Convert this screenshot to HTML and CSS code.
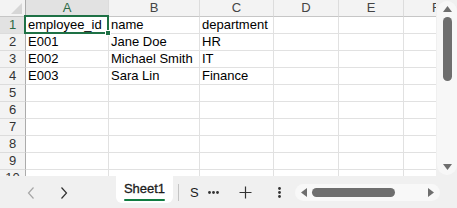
FILE: index.html
```html
<!DOCTYPE html>
<html>
<head>
<meta charset="utf-8">
<link rel="stylesheet" href="styles.css">
</head>
<body>
<div class="app">
  <div class="main">
    <div class="sheet">
      <div class="corner"><svg width="26" height="17" viewBox="0 0 26 17"><polygon points="22,3 22,14 11,14" fill="#d6d6d6"/></svg></div>
      <div class="ch sel">A</div><div class="ch">B</div><div class="ch">C</div><div class="ch">D</div><div class="ch">E</div><div class="ch">F</div>

      <div class="rh sel">1</div><div class="c">employee_id</div><div class="c">name</div><div class="c">department</div><div class="c"></div><div class="c"></div><div class="c"></div>
      <div class="rh">2</div><div class="c">E001</div><div class="c">Jane Doe</div><div class="c">HR</div><div class="c"></div><div class="c"></div><div class="c"></div>
      <div class="rh">3</div><div class="c">E002</div><div class="c">Michael Smith</div><div class="c">IT</div><div class="c"></div><div class="c"></div><div class="c"></div>
      <div class="rh">4</div><div class="c">E003</div><div class="c">Sara Lin</div><div class="c">Finance</div><div class="c"></div><div class="c"></div><div class="c"></div>
      <div class="rh">5</div><div class="c"></div><div class="c"></div><div class="c"></div><div class="c"></div><div class="c"></div><div class="c"></div>
      <div class="rh">6</div><div class="c"></div><div class="c"></div><div class="c"></div><div class="c"></div><div class="c"></div><div class="c"></div>
      <div class="rh">7</div><div class="c"></div><div class="c"></div><div class="c"></div><div class="c"></div><div class="c"></div><div class="c"></div>
      <div class="rh">8</div><div class="c"></div><div class="c"></div><div class="c"></div><div class="c"></div><div class="c"></div><div class="c"></div>
      <div class="rh">9</div><div class="c"></div><div class="c"></div><div class="c"></div><div class="c"></div><div class="c"></div><div class="c"></div>
      <div class="rh">10</div><div class="c"></div><div class="c"></div><div class="c"></div><div class="c"></div><div class="c"></div><div class="c"></div>
      <div class="selection"><span class="handle"></span></div>
    </div>
    <div class="vscroll">
      <div class="vtrack">
        <svg class="arr-up" width="9" height="6" viewBox="0 0 9 6"><polygon points="4.5,0 9,6 0,6" fill="#6e6e6e"/></svg>
        <div class="vthumb"></div>
        <div class="vspace"></div>
        <svg class="arr-down" width="9" height="6" viewBox="0 0 9 6"><polygon points="0,0 9,0 4.5,6" fill="#6e6e6e"/></svg>
      </div>
    </div>
  </div>
  <div class="tabbar">
    <div class="nav">
      <svg width="8" height="12" viewBox="0 0 8 12"><polyline points="6.5,0.5 1.5,6 6.5,11.5" fill="none" stroke="#a6a6a6" stroke-width="1.2"/></svg>
      <svg width="8" height="12" viewBox="0 0 8 12"><polyline points="1.5,0.5 6.5,6 1.5,11.5" fill="none" stroke="#303030" stroke-width="1.2"/></svg>
    </div>
    <div class="tab"><span class="tab-label">Sheet1</span><span class="tab-line"></span></div>
    <div class="sep"></div>
    <div class="tab2">S</div>
    <svg class="more" width="11" height="3" viewBox="0 0 11 3"><circle cx="1.5" cy="1.5" r="1.4" fill="#333"/><circle cx="5.5" cy="1.5" r="1.4" fill="#333"/><circle cx="9.5" cy="1.5" r="1.4" fill="#333"/></svg>
    <svg class="plus" width="13" height="13" viewBox="0 0 13 13"><path d="M6.5 0.5V12.5M0.5 6.5H12.5" stroke="#333" stroke-width="1.2"/></svg>
    <svg class="kebab" width="3" height="11" viewBox="0 0 3 11"><circle cx="1.5" cy="1.5" r="1.4" fill="#333"/><circle cx="1.5" cy="5.5" r="1.4" fill="#333"/><circle cx="1.5" cy="9.5" r="1.4" fill="#333"/></svg>
    <div class="hscroll">
      <svg width="6" height="9" viewBox="0 0 6 9"><polygon points="0,4.5 6,0 6,9" fill="#6e6e6e"/></svg>
      <div class="hthumb"></div>
      <div class="hspace"></div>
      <svg width="6" height="9" viewBox="0 0 6 9"><polygon points="0,0 6,4.5 0,9" fill="#6e6e6e"/></svg>
    </div>
  </div>
</div>
</body>
</html>
```
FILE: styles.css
```css
* { box-sizing: border-box; }
html, body { margin: 0; padding: 0; }
body {
  width: 457px;
  height: 208px;
  overflow: hidden;
  font-family: "Liberation Sans", Arial, sans-serif;
  font-size: 13px;
  background: #f0f0f0;
}
.app { display: flex; flex-direction: column; width: 457px; height: 208px; }
.main { display: flex; height: 176px; }
.sheet {
  position: relative;
  flex: 0 0 436px;
  width: 436px;
  height: 176px;
  overflow: hidden;
  background: #fff;
  display: grid;
  grid-template-columns: 26px 83px 91px 74px 65px 65px 65px;
  grid-auto-rows: 17px;
}
.corner { background: #f3f3f3; border-right: 1px solid #ababab; border-bottom: 1px solid #c6c6c6; }
.corner svg { display: block; }
.ch {
  background: #f3f3f3;
  color: #444;
  text-align: center;
  line-height: 16px;
  border-right: 1px solid #dcdcdc;
  border-bottom: 1px solid #c6c6c6;
}
.ch.sel { background: #e2e2e2; color: #2b6a47; }
.rh {
  background: #f3f3f3;
  color: #333;
  text-align: center;
  line-height: 16px;
  border-right: 1px solid #ababab;
  border-bottom: 1px solid #dcdcdc;
}
.rh.sel { background: #e2e2e2; color: #2b6a47; }
.c {
  color: #000;
  line-height: 16px;
  padding-left: 2px;
  white-space: nowrap;
  overflow: hidden;
  border-right: 1px solid #e1e1e1;
  border-bottom: 1px solid #e1e1e1;
}
.selection {
  position: absolute;
  left: 24px;
  top: 15px;
  width: 85px;
  height: 19px;
  border: 2px solid #1e7145;
}
.handle {
  position: absolute;
  right: -4px;
  bottom: -4px;
  width: 6px;
  height: 6px;
  background: #1e7145;
  border: 1px solid #fff;
}
.vscroll { flex: 0 0 21px; width: 21px; height: 176px; background: #f0f0f0; padding: 1px 0 0 1px; }
.vtrack {
  height: 174px;
  background: #f7f7f7;
  border-radius: 10px;
  display: flex;
  flex-direction: column;
  align-items: center;
  padding: 5px 0 5px;
}
.arr-up { display: block; }
.vthumb { width: 9px; height: 64px; margin-top: 5px; background: #6e6e6e; border-radius: 5px; }
.vspace { flex: 1; }
.arr-down { display: block; }
.tabbar { display: flex; align-items: center; height: 32px; background: #f0f0f0; }
.nav { display: flex; align-items: center; gap: 25px; width: 116px; padding-left: 27px; padding-top: 1px; }
.nav svg { display: block; }
.tab {
  align-self: flex-start;
  width: 57px;
  height: 27px;
  background: #fff;
  border-radius: 0 0 6px 6px;
  display: flex;
  flex-direction: column;
  align-items: center;
  padding-top: 5px;
}
.tab-label { line-height: 16px; color: #1b1b1b; -webkit-text-stroke: 0.3px #1b1b1b; }
.tab-line { width: 41px; height: 2px; margin-top: 2px; background: #107c41; border-radius: 1px; }
.sep { width: 1px; height: 17px; margin-left: 5px; background: #c4c4c4; }
.tab2 { margin-left: 11px; line-height: 16px; color: #1b1b1b; padding-top: 1px; }
.more { display: block; margin-left: 9px; }
.plus { display: block; margin-left: 20px; }
.kebab { display: block; margin-left: 26px; }
.hscroll {
  display: flex;
  align-items: center;
  margin-left: 14px;
  width: 145px;
  height: 17px;
  background: #f8f8f8;
  border-radius: 9px;
  padding: 0 6px 0 6px;
}
.hscroll svg { display: block; }
.hthumb { width: 83px; height: 9px; margin-left: 5px; background: #6e6e6e; border-radius: 5px; }
.hspace { flex: 1; }
```
